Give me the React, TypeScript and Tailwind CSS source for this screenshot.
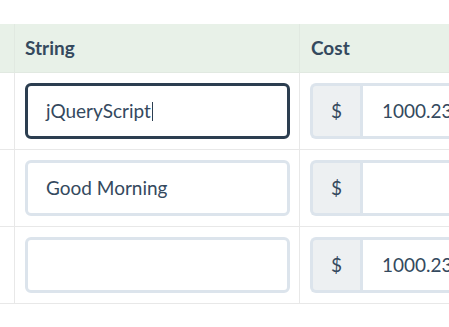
import React from "react";

const font = { fontFamily: "Lato, 'Open Sans', sans-serif" };

function TextBox({ value, focused }: { value?: string; focused?: boolean }) {
  return (
    <div
      className={`h-[56px] w-full rounded-[6px] border-[3px] bg-white flex items-center pl-[18px] text-[19px] text-[#34495e] ${
        focused ? "border-[#2c3e50]" : "border-[#dce4ec]"
      }`}
    >
      <span>{value}</span>
      {focused && <span className="ml-[1px] inline-block h-[19px] w-[1px] bg-[#2c3e50]" />}
    </div>
  );
}

function CostBox({ value }: { value?: string }) {
  return (
    <div className="flex h-[56px] w-[260px]">
      <div className="w-[50px] h-full rounded-l-[6px] border-[3px] border-r-0 border-[#dce4ec] bg-[#edf0f2] flex items-center justify-center text-[19px] text-[#34495e]">
        $
      </div>
      <div className="flex-1 h-full border-[3px] border-[#dce4ec] bg-white flex items-center pl-[19px] text-[19px] text-[#34495e]">
        {value}
      </div>
    </div>
  );
}

export default function App() {
  const rows = [
    { s: "jQueryScript", focused: true, c: "1000.23" },
    { s: "Good Morning", focused: false, c: "" },
    { s: "", focused: false, c: "1000.23" },
  ];
  return (
    <div className="w-[449px] h-[327px] overflow-hidden bg-white pt-[24px]" style={font}>
      <div className="grid grid-cols-[15px_285px_260px] w-[560px]">
        <div className="h-[49px] bg-[#e8f1e8] border-b border-r border-[#e1e9e1]" />
        <div className="h-[49px] bg-[#e8f1e8] border-b border-r border-[#e1e9e1] flex items-center pl-[10px] text-[19px] font-bold text-[#34495e]">
          String
        </div>
        <div className="h-[49px] bg-[#e8f1e8] border-b border-[#e1e9e1] flex items-center pl-[11px] text-[19px] font-bold text-[#34495e]">
          Cost
        </div>
        {rows.map((r, i) => (
          <React.Fragment key={i}>
            <div className="h-[77px] border-b border-r border-[#e8e8e8]" />
            <div className="h-[77px] border-b border-r border-[#e8e8e8] pt-[10px] pl-[10px] pr-[9px]">
              <TextBox value={r.s} focused={r.focused} />
            </div>
            <div className="h-[77px] border-b border-[#e8e8e8] pt-[10px] pl-[10px]">
              <CostBox value={r.c} />
            </div>
          </React.Fragment>
        ))}
      </div>
    </div>
  );
}
